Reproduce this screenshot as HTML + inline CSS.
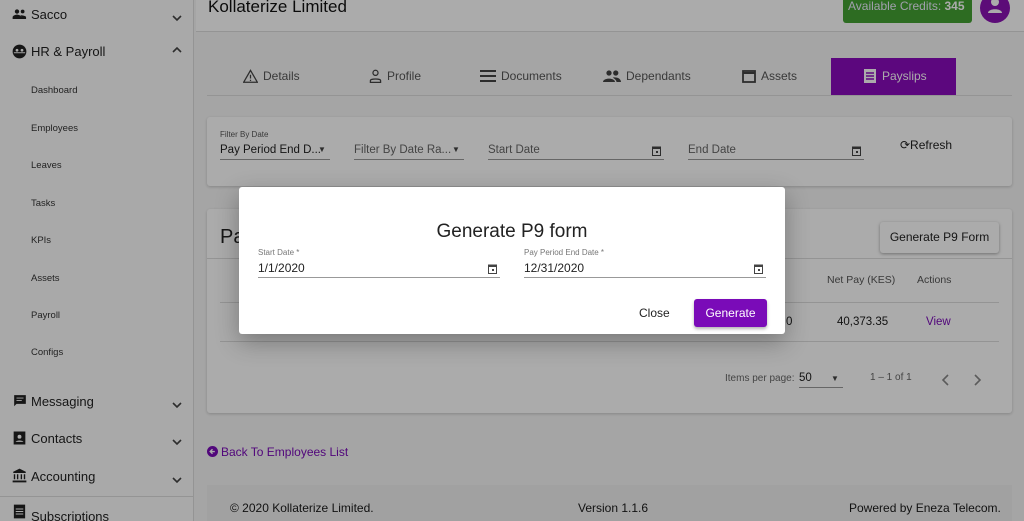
<!DOCTYPE html>
<html><head><style>
*{box-sizing:border-box;margin:0;padding:0}
html,body{width:1024px;height:521px;overflow:hidden}
body{font-family:"Liberation Sans",sans-serif;background:#f7f7f7;position:relative;color:#1a1a1a}
.abs{position:absolute}
.side{left:0;top:0;width:194px;height:521px;background:#fdfdfd;border-right:1px solid #ddd}
.si{position:absolute;left:31px;font-size:13px;color:#222}
.sub{position:absolute;left:31px;font-size:9.5px;color:#333}
.chev{position:absolute;left:171px;width:12px;height:12px}
.card{background:#fff;border-radius:3px;box-shadow:0 1px 3px rgba(0,0,0,.2)}
.tab{position:absolute;top:69px;font-size:12px;color:#555;display:flex;align-items:center;gap:5px}
.lbl{font-size:11.5px;color:#666}
.line{position:absolute;height:1px;background:#999}
.ov{position:absolute;left:0;top:0;width:1024px;height:521px;background:rgba(0,0,0,.33)}
</style></head><body>
<div class="abs side">
 <div class="si" style="top:7px">Sacco</div>
 <svg class="abs" style="left:12px;top:8px" width="15" height="12" viewBox="0 0 24 18"><circle cx="8" cy="5" r="3.5" fill="#222"/><circle cx="17" cy="5" r="3" fill="#222"/><path d="M1 17v-3c0-2 4-4 7-4s7 2 7 4v3zM15 17v-3c0-1-.5-2-1.5-3 3 0 9 1 9 3v3z" fill="#222"/></svg>
 <svg class="chev" style="top:12px" viewBox="0 0 12 12"><path d="M2 4l4 4 4-4" stroke="#444" stroke-width="1.6" fill="none"/></svg>
 <div class="si" style="top:44px">HR &amp; Payroll</div>
 <svg class="abs" style="left:12px;top:44px" width="15" height="15" viewBox="0 0 24 24"><circle cx="12" cy="12" r="11" fill="#222"/><circle cx="8" cy="10" r="2.2" fill="#fff"/><circle cx="16" cy="10" r="2.2" fill="#fff"/><path d="M3 14h18" stroke="#fff" stroke-width="1.5"/></svg>
 <svg class="chev" style="top:44px" viewBox="0 0 12 12"><path d="M2 8l4-4 4 4" stroke="#444" stroke-width="1.6" fill="none"/></svg>
 <div class="sub" style="top:85px">Dashboard</div>
 <div class="sub" style="top:123px">Employees</div>
 <div class="sub" style="top:160px">Leaves</div>
 <div class="sub" style="top:198px">Tasks</div>
 <div class="sub" style="top:235px">KPIs</div>
 <div class="sub" style="top:273px">Assets</div>
 <div class="sub" style="top:310px">Payroll</div>
 <div class="sub" style="top:347px">Configs</div>
 <div class="si" style="top:394px">Messaging</div>
 <svg class="abs" style="left:13px;top:394px" width="14" height="14" viewBox="0 0 24 24"><path d="M2 2h20v15H6l-4 4z" fill="#222"/><path d="M6 7h12M6 11h9" stroke="#fff" stroke-width="1.6"/></svg>
 <svg class="chev" style="top:399px" viewBox="0 0 12 12"><path d="M2 4l4 4 4-4" stroke="#444" stroke-width="1.6" fill="none"/></svg>
 <div class="si" style="top:431px">Contacts</div>
 <svg class="abs" style="left:13px;top:430px" width="13" height="16" viewBox="0 0 20 24"><rect x="1" y="2" width="18" height="20" fill="#222"/><circle cx="10" cy="10" r="3" fill="#fff"/><path d="M4 18c1-3 11-3 12 0z" fill="#fff"/></svg>
 <svg class="chev" style="top:436px" viewBox="0 0 12 12"><path d="M2 4l4 4 4-4" stroke="#444" stroke-width="1.6" fill="none"/></svg>
 <div class="si" style="top:469px">Accounting</div>
 <svg class="abs" style="left:12px;top:468px" width="15" height="15" viewBox="0 0 24 24"><path d="M12 1l10 5v2H2V6z" fill="#222"/><path d="M4 10v8M9 10v8M15 10v8M20 10v8" stroke="#222" stroke-width="2.2"/><rect x="1" y="20" width="22" height="3" fill="#222"/></svg>
 <svg class="chev" style="top:474px" viewBox="0 0 12 12"><path d="M2 4l4 4 4-4" stroke="#444" stroke-width="1.6" fill="none"/></svg>
 <div class="abs" style="left:0;top:496px;width:194px;height:1px;background:#ddd"></div>
 <div class="si" style="top:509px">Subscriptions</div>
 <svg class="abs" style="left:13px;top:504px" width="13" height="15" viewBox="0 0 20 24"><rect x="1" y="1" width="18" height="22" fill="#222"/><path d="M4 8h12M4 12h12M4 16h12" stroke="#fff" stroke-width="1.5"/></svg>
</div>
<div class="abs" style="left:196px;top:0;width:828px;height:31px;background:#fff"></div>
<div class="abs" style="left:208px;top:-3px;font-size:17px;color:#111">Kollaterize Limited</div>
<div class="abs" style="left:843px;top:0;width:129px;height:23px;background:#43a233;border-radius:0 0 3px 3px;color:#eef;font-size:12px;padding:0 0 0 5px;line-height:13px">Available Credits: <b style="color:#fff">345</b></div>
<div class="abs" style="left:980px;top:-7px;width:30px;height:30px;border-radius:50%;background:#8a12b3"></div>
<svg class="abs" style="left:987px;top:-3px" width="16" height="18" viewBox="0 0 16 18"><circle cx="8" cy="5" r="4" fill="#fff"/><path d="M1 16c0-5 14-5 14 0z" fill="#fff"/></svg>
<div class="abs" style="left:196px;top:31px;width:828px;height:1px;background:#ddd"></div>
<div class="tab" style="left:243px"><svg width="15" height="14" viewBox="0 0 24 22"><path d="M12 2L1 21h22z" fill="none" stroke="#444" stroke-width="2"/><path d="M12 9v6M12 17v2" stroke="#444" stroke-width="2"/></svg>Details</div>
<div class="tab" style="left:369px"><svg width="13" height="14" viewBox="0 0 20 22"><circle cx="10" cy="6" r="4" fill="none" stroke="#444" stroke-width="2"/><path d="M2 21v-3c0-3 16-3 16 0v3z" fill="none" stroke="#444" stroke-width="2"/></svg>Profile</div>
<div class="tab" style="left:480px"><svg width="16" height="12" viewBox="0 0 16 12"><path d="M0 1h16M0 6h16M0 11h16" stroke="#444" stroke-width="2"/></svg>Documents</div>
<div class="tab" style="left:603px"><svg width="18" height="12" viewBox="0 0 24 16"><circle cx="8" cy="4" r="3.5" fill="#444"/><circle cx="17" cy="4" r="3.5" fill="#444"/><path d="M0 16c0-6 16-6 16 0zM13 10c5-1 11 1 11 6h-6c0-2-2-4-5-6z" fill="#444"/></svg>Dependants</div>
<div class="tab" style="left:742px"><svg width="14" height="13" viewBox="0 0 14 13"><rect x="1" y="1" width="12" height="11" fill="none" stroke="#444" stroke-width="1.8"/><path d="M1 3h12" stroke="#444" stroke-width="2"/></svg>Assets</div>
<div class="abs" style="left:831px;top:58px;width:125px;height:37px;background:#8a0bbd;color:#fff;font-size:12px;padding:11px 0 0 33px;display:flex;gap:6px"><svg width="12" height="14" viewBox="0 0 12 14"><rect x="0" y="0" width="12" height="14" fill="#fff"/><path d="M2 4h8M2 7h8M2 10h8" stroke="#8a0bbd" stroke-width="1.4"/></svg>Payslips</div>
<div class="abs" style="left:207px;top:95px;width:805px;height:1px;background:#ddd"></div>
<div class="abs card" style="left:207px;top:117px;width:805px;height:69px"></div>
<div class="abs" style="left:220px;top:130px;font-size:8px;color:#555">Filter By Date</div>
<div class="abs lbl" style="left:220px;top:144px;color:#222">Pay Period End D...</div><div class="abs" style="left:318px;top:145px;font-size:8px;color:#444">▼</div><div class="line" style="left:220px;top:159px;width:110px"></div>
<div class="abs lbl" style="left:354px;top:144px">Filter By Date Ra...</div><div class="abs" style="left:452px;top:145px;font-size:8px;color:#444">▼</div><div class="line" style="left:354px;top:159px;width:110px"></div>
<div class="abs lbl" style="left:488px;top:144px">Start Date</div><svg class="abs" style="left:652px;top:146px" width="9" height="10" viewBox="0 0 9 10"><rect x=".5" y="1" width="8" height="8.5" fill="none" stroke="#444"/><rect x="1" y="1" width="7" height="2" fill="#444"/><rect x="4" y="5" width="2" height="2" fill="#444"/></svg><div class="line" style="left:488px;top:159px;width:176px"></div>
<div class="abs lbl" style="left:688px;top:144px">End Date</div><svg class="abs" style="left:852px;top:146px" width="9" height="10" viewBox="0 0 9 10"><rect x=".5" y="1" width="8" height="8.5" fill="none" stroke="#444"/><rect x="1" y="1" width="7" height="2" fill="#444"/><rect x="4" y="5" width="2" height="2" fill="#444"/></svg><div class="line" style="left:688px;top:159px;width:176px"></div>
<div class="abs" style="left:900px;top:138px;font-size:12px;color:#222">⟳Refresh</div>
<div class="abs card" style="left:207px;top:209px;width:805px;height:204px"></div>
<div class="abs" style="left:220px;top:226px;font-size:20px;color:#222">Pa</div>
<div class="abs" style="left:207px;top:258px;width:805px;height:1px;background:#ddd"></div>
<div class="abs" style="left:880px;top:222px;width:119px;height:31px;background:#fff;box-shadow:0 1px 3px rgba(0,0,0,.35);border-radius:3px;font-size:12px;text-align:center;line-height:31px;color:#222">Generate P9 Form</div>
<div class="abs" style="left:827px;top:274px;font-size:10.5px;color:#555">Net Pay (KES)</div>
<div class="abs" style="left:917px;top:274px;font-size:10.5px;color:#555">Actions</div>
<div class="abs" style="left:220px;top:302px;width:779px;height:1px;background:#ddd"></div>
<div class="abs" style="left:786px;top:316px;font-size:11.5px">0</div>
<div class="abs" style="left:837px;top:316px;font-size:11.5px">40,373.35</div>
<div class="abs" style="left:926px;top:316px;font-size:11.5px;color:#7a0bb8">View</div>
<div class="abs" style="left:220px;top:341px;width:779px;height:1px;background:#ddd"></div>
<div class="abs" style="left:725px;top:373px;font-size:10px;color:#666">Items per page:</div>
<div class="abs" style="left:799px;top:372px;font-size:11.5px">50</div><div class="abs" style="left:831px;top:374px;font-size:8px;color:#444">▼</div><div class="line" style="left:799px;top:387px;width:44px"></div>
<div class="abs" style="left:870px;top:372px;font-size:10px;color:#666">1 – 1 of 1</div>
<svg class="abs" style="left:941px;top:373px" width="10" height="14" viewBox="0 0 10 14"><path d="M7 2L2 7l5 5" stroke="#888" stroke-width="1.6" fill="none"/></svg>
<svg class="abs" style="left:972px;top:373px" width="10" height="14" viewBox="0 0 10 14"><path d="M3 2l5 5-5 5" stroke="#888" stroke-width="1.6" fill="none"/></svg>
<svg class="abs" style="left:207px;top:446px" width="11" height="11" viewBox="0 0 12 12"><circle cx="6" cy="6" r="6" fill="#7a0bb8"/><path d="M8.5 6H4M6 3.5L3.5 6 6 8.5" stroke="#fff" stroke-width="1.5" fill="none"/></svg>
<div class="abs" style="left:221px;top:445px;font-size:12px;color:#7a0bb8">Back To Employees List</div>
<div class="abs" style="left:207px;top:485px;width:805px;height:36px;background:#f0f0f0"></div>
<div class="abs" style="left:230px;top:501px;font-size:12px">© 2020 Kollaterize Limited.</div>
<div class="abs" style="left:578px;top:501px;font-size:12px">Version 1.1.6</div>
<div class="abs" style="left:849px;top:501px;font-size:12px">Powered by Eneza Telecom.</div>
<div class="ov"></div>
<div class="abs" style="left:239px;top:187px;width:546px;height:147px;background:#fff;border-radius:3px;box-shadow:0 8px 24px rgba(0,0,0,.3)">
 <div class="abs" style="left:0;width:546px;top:34px;text-align:center;font-size:19px;color:#222">Generate P9 form</div>
 <div class="abs" style="left:19px;top:61px;font-size:8px;color:#777">Start Date *</div>
 <div class="abs" style="left:19px;top:74px;font-size:12px;color:#222">1/1/2020</div>
 <svg class="abs" style="left:249px;top:77px" width="9" height="10" viewBox="0 0 9 10"><rect x=".5" y="1" width="8" height="8.5" fill="none" stroke="#444"/><rect x="1" y="1" width="7" height="2" fill="#444"/><rect x="4" y="5" width="2" height="2" fill="#444"/></svg>
 <div class="abs" style="left:19px;top:90px;width:242px;height:1px;background:#999"></div>
 <div class="abs" style="left:285px;top:61px;font-size:8px;color:#777">Pay Period End Date *</div>
 <div class="abs" style="left:285px;top:74px;font-size:12px;color:#222">12/31/2020</div>
 <svg class="abs" style="left:515px;top:77px" width="9" height="10" viewBox="0 0 9 10"><rect x=".5" y="1" width="8" height="8.5" fill="none" stroke="#444"/><rect x="1" y="1" width="7" height="2" fill="#444"/><rect x="4" y="5" width="2" height="2" fill="#444"/></svg>
 <div class="abs" style="left:285px;top:90px;width:242px;height:1px;background:#999"></div>
 <div class="abs" style="left:400px;top:119px;font-size:12px;color:#222">Close</div>
 <div class="abs" style="left:455px;top:112px;width:73px;height:28px;background:#7a0bb8;border-radius:3px;color:#fff;font-size:12px;text-align:center;line-height:28px;box-shadow:0 2px 3px rgba(0,0,0,.3)">Generate</div>
</div>
</body></html>
